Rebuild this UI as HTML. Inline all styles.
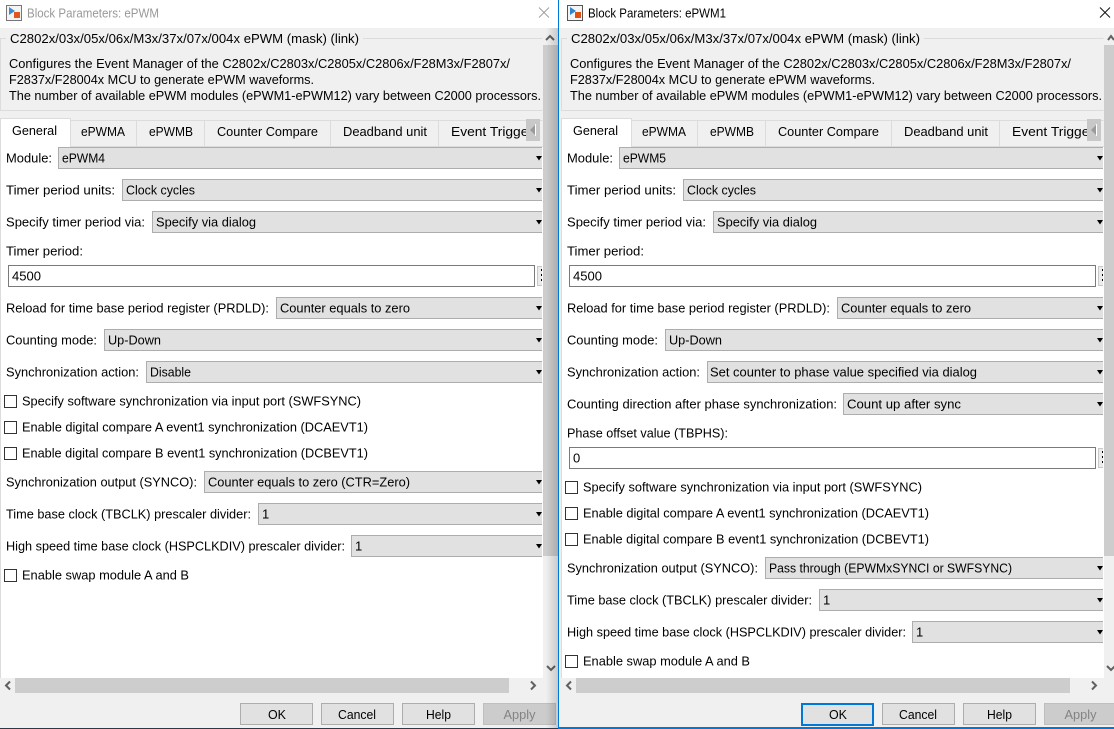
<!DOCTYPE html>
<html><head><meta charset="utf-8"><title>Block Parameters</title>
<style>
html,body{margin:0;padding:0;background:#fff;width:1114px;height:729px;overflow:hidden}
svg{display:block;position:absolute;left:0;top:0}
text{font-family:"Liberation Sans",sans-serif;font-size:13px;fill:#000}
.r{shape-rendering:crispEdges}
.dd{fill:#e1e1e1;stroke:#adadad;stroke-width:1;shape-rendering:crispEdges}
.ed{fill:#fff;stroke:#7a7a7a;stroke-width:1;shape-rendering:crispEdges}
.cb{fill:#fff;stroke:#333;stroke-width:1;shape-rendering:crispEdges}
.btn{fill:#e1e1e1;stroke:#adadad;stroke-width:1;shape-rendering:crispEdges}
.ap{fill:#cccccc;stroke:#bfbfbf;stroke-width:1;shape-rendering:crispEdges}
.ln{fill:none;stroke:#dcdcdc;stroke-width:1;shape-rendering:crispEdges}
.ar{fill:none;stroke:#606060;stroke-width:2}
.eb{fill:#ececec;stroke:#c8c8c8;stroke-width:1;shape-rendering:crispEdges}
</style></head><body>
<svg width="1114" height="729" viewBox="0 0 1114 729" xmlns="http://www.w3.org/2000/svg">
<defs>
<clipPath id="c"><rect x="0" y="146" width="542" height="532"/></clipPath>
<clipPath id="tabs"><rect x="0" y="118" width="526" height="29"/></clipPath>
<linearGradient id="sh" x1="0" x2="1" y1="0" y2="0"><stop offset="0" stop-color="#000" stop-opacity="0"/><stop offset="1" stop-color="#000" stop-opacity=".16"/></linearGradient>
</defs>
<rect class="r" width="1114" height="729" fill="#f0f0f0"/>

<!-- LEFT WINDOW -->
<g>
<rect class="r" x="0" y="0" width="558" height="28" fill="#fff"/>
<rect class="r" x="6.5" y="5.500" width="15" height="15" fill="#f4f4f4" stroke="#777"/>
<path d="M9 7l6 4-6 4z" fill="#3a8fd0"/><rect class="r" x="14" y="12" width="6" height="6" fill="#e0581c"/>
<text x="27" y="17.500" style="fill:#999" textLength="132" lengthAdjust="spacingAndGlyphs">Block Parameters: ePWM</text>
<path d="M539 7.500l10 10M549 7.500l-10 10" stroke="#a0a0a0" stroke-width="1" fill="none"/>

<path class="ln" d="M6 38.500H0.500V110.500H542.500M363 38.500H542.500"/>
<text x="10" y="43" textLength="349" lengthAdjust="spacingAndGlyphs">C2802x/03x/05x/06x/M3x/37x/07x/004x ePWM (mask) (link)</text>
<text x="9" y="68" textLength="501" lengthAdjust="spacingAndGlyphs">Configures the Event Manager of the C2802x/C2803x/C2805x/C2806x/F28M3x/F2807x/</text>
<text x="9" y="84" textLength="305" lengthAdjust="spacingAndGlyphs">F2837x/F28004x MCU to generate ePWM waveforms.</text>
<text x="9" y="100" textLength="532" lengthAdjust="spacingAndGlyphs">The number of available ePWM modules (ePWM1-ePWM12) vary between C2000 processors.</text>

<path class="ln" d="M70 120.500H542.500M136.500 120V146M204.500 120V146M330.500 120V146M438.500 120V146"/>
<rect class="r" x="0" y="146" width="543" height="1" fill="#dcdcdc"/>
<rect class="r" x="0" y="118" width="71" height="30" fill="#dcdcdc"/>
<rect class="r" x="1" y="119" width="69" height="29" fill="#fff"/>
<text x="12" y="135" textLength="45" lengthAdjust="spacingAndGlyphs">General</text>
<text x="81" y="136" textLength="44" lengthAdjust="spacingAndGlyphs">ePWMA</text>
<text x="149" y="136" textLength="44" lengthAdjust="spacingAndGlyphs">ePWMB</text>
<text x="217" y="136" textLength="101" lengthAdjust="spacingAndGlyphs">Counter Compare</text>
<text x="343" y="136" textLength="84" lengthAdjust="spacingAndGlyphs">Deadband unit</text>
<g clip-path="url(#tabs)"><text x="451" y="136" textLength="82" lengthAdjust="spacingAndGlyphs">Event Trigger</text></g>
<rect class="r" x="526" y="119" width="14" height="22" fill="#c8c8c8"/>
<path d="M536 124v12l-6-6z" fill="#9a9a9a"/><rect class="r" x="535" y="124" width="1" height="12" fill="#fff"/>

<rect class="r" x="0" y="147" width="543" height="531" fill="#fff"/>
<rect class="r" x="0" y="147" width="1" height="531" fill="#dcdcdc"/>
<g clip-path="url(#c)">
<text x="6" y="162.500" textLength="46" lengthAdjust="spacingAndGlyphs">Module:</text>
<rect class="dd" x="58.500" y="147.500" width="600" height="21"/><text x="62" y="162.500" textLength="43" lengthAdjust="spacingAndGlyphs">ePWM4</text>
<path d="M536 156h6l-3 4.500z"/>
<text x="6" y="194.500" textLength="109" lengthAdjust="spacingAndGlyphs">Timer period units:</text>
<rect class="dd" x="122.500" y="179.500" width="600" height="21"/><text x="126" y="194.500" textLength="69" lengthAdjust="spacingAndGlyphs">Clock cycles</text>
<path d="M536 188h6l-3 4.500z"/>
<text x="6" y="226.500" textLength="139" lengthAdjust="spacingAndGlyphs">Specify timer period via:</text>
<rect class="dd" x="152.500" y="211.500" width="600" height="21"/><text x="156" y="226.500" textLength="100" lengthAdjust="spacingAndGlyphs">Specify via dialog</text>
<path d="M536 220h6l-3 4.500z"/>
<text x="6" y="255.500" textLength="77" lengthAdjust="spacingAndGlyphs">Timer period:</text>
<rect class="ed" x="8.500" y="265.500" width="526" height="21"/><text x="12" y="280.500" textLength="29" lengthAdjust="spacingAndGlyphs">4500</text>
<rect class="eb" x="537.500" y="266.500" width="8" height="19"/><path class="r" d="M541 269h1v2h-1zM541 274h1v2h-1zM541 279h1v2h-1z" fill="#000"/>
<text x="6" y="312.500" textLength="263" lengthAdjust="spacingAndGlyphs">Reload for time base period register (PRDLD):</text>
<rect class="dd" x="276.500" y="297.500" width="600" height="21"/><text x="280" y="312.500" textLength="130" lengthAdjust="spacingAndGlyphs">Counter equals to zero</text>
<path d="M536 306h6l-3 4.500z"/>
<text x="6" y="344.500" textLength="91" lengthAdjust="spacingAndGlyphs">Counting mode:</text>
<rect class="dd" x="104.500" y="329.500" width="600" height="21"/><text x="108" y="344.500" textLength="53" lengthAdjust="spacingAndGlyphs">Up-Down</text>
<path d="M536 338h6l-3 4.500z"/>
<text x="6" y="376.500" textLength="133" lengthAdjust="spacingAndGlyphs">Synchronization action:</text>
<rect class="dd" x="146.500" y="361.500" width="600" height="21"/><text x="150" y="376.500" textLength="41" lengthAdjust="spacingAndGlyphs">Disable</text>
<path d="M536 370h6l-3 4.500z"/>
<rect class="cb" x="4.500" y="395.500" width="12" height="12"/><text x="22" y="405.500" textLength="339" lengthAdjust="spacingAndGlyphs">Specify software synchronization via input port (SWFSYNC)</text>
<rect class="cb" x="4.500" y="421.500" width="12" height="12"/><text x="22" y="431.500" textLength="346" lengthAdjust="spacingAndGlyphs">Enable digital compare A event1 synchronization (DCAEVT1)</text>
<rect class="cb" x="4.500" y="447.500" width="12" height="12"/><text x="22" y="457.500" textLength="346" lengthAdjust="spacingAndGlyphs">Enable digital compare B event1 synchronization (DCBEVT1)</text>
<text x="6" y="486.500" textLength="191" lengthAdjust="spacingAndGlyphs">Synchronization output (SYNCO):</text>
<rect class="dd" x="204.500" y="471.500" width="600" height="21"/><text x="208" y="486.500" textLength="202" lengthAdjust="spacingAndGlyphs">Counter equals to zero (CTR=Zero)</text>
<path d="M536 480h6l-3 4.500z"/>
<text x="6" y="518.500" textLength="245" lengthAdjust="spacingAndGlyphs">Time base clock (TBCLK) prescaler divider:</text>
<rect class="dd" x="258.500" y="503.500" width="600" height="21"/><text x="262" y="518.500">1</text>
<path d="M536 512h6l-3 4.500z"/>
<text x="6" y="550.500" textLength="339" lengthAdjust="spacingAndGlyphs">High speed time base clock (HSPCLKDIV) prescaler divider:</text>
<rect class="dd" x="351.500" y="535.500" width="600" height="21"/><text x="355" y="550.500">1</text>
<path d="M536 544h6l-3 4.500z"/>
<rect class="cb" x="4.500" y="569.500" width="12" height="12"/><text x="22" y="579.500" textLength="167" lengthAdjust="spacingAndGlyphs">Enable swap module A and B</text>
</g>

<!-- scrollbars -->
<rect class="r" x="543" y="28" width="15" height="650" fill="#f0f0f0"/>
<rect class="r" x="543" y="45" width="15" height="511" fill="#cdcdcd"/>
<path class="ar" d="M546 40l4-4 4 4"/><path class="ar" d="M547 666l4 4 4-4"/>
<rect class="r" x="15" y="678" width="494" height="15" fill="#cdcdcd"/>
<path class="ar" d="M10 681.500l-4 4 4 4"/><path class="ar" d="M531 681.500l4 4-4 4"/>

<rect class="btn" x="240.500" y="703.500" width="72" height="21"/><text x="268" y="719" textLength="18" lengthAdjust="spacingAndGlyphs">OK</text>
<rect class="btn" x="321.500" y="703.500" width="72" height="21"/><text x="338" y="719" textLength="38" lengthAdjust="spacingAndGlyphs">Cancel</text>
<rect class="btn" x="402.500" y="703.500" width="72" height="21"/><text x="426" y="719" textLength="25" lengthAdjust="spacingAndGlyphs">Help</text>
<rect class="ap" x="483.500" y="703.500" width="72" height="21"/><text x="503.500" y="719" style="fill:#838383" textLength="32" lengthAdjust="spacingAndGlyphs">Apply</text>
<rect class="r" x="0" y="728" width="558" height="1" fill="#2b3a4a"/>
<rect class="r" x="546" y="28" width="12" height="700" fill="url(#sh)"/>
</g>

<!-- RIGHT WINDOW -->
<rect class="r" x="558" y="0" width="556" height="28" fill="#fff"/>
<rect class="r" x="559" y="28" width="555" height="701" fill="#f0f0f0"/>
<rect class="r" x="567.500" y="5.500" width="15" height="15" fill="#f4f4f4" stroke="#555"/>
<path d="M570 7l6 4-6 4z" fill="#2f86cc"/><rect class="r" x="575" y="12" width="6" height="6" fill="#e0500f"/>
<text x="588" y="17.500" textLength="138" lengthAdjust="spacingAndGlyphs">Block Parameters: ePWM1</text>
<path d="M1100 7.500l10 10M1110 7.500l-10 10" stroke="#111" stroke-width="1" fill="none"/>

<g transform="translate(561,0)">
<path class="ln" d="M6 38.500H0.500V110.500H542.500M363 38.500H542.500"/>
<text x="10" y="43" textLength="349" lengthAdjust="spacingAndGlyphs">C2802x/03x/05x/06x/M3x/37x/07x/004x ePWM (mask) (link)</text>
<text x="9" y="68" textLength="501" lengthAdjust="spacingAndGlyphs">Configures the Event Manager of the C2802x/C2803x/C2805x/C2806x/F28M3x/F2807x/</text>
<text x="9" y="84" textLength="305" lengthAdjust="spacingAndGlyphs">F2837x/F28004x MCU to generate ePWM waveforms.</text>
<text x="9" y="100" textLength="532" lengthAdjust="spacingAndGlyphs">The number of available ePWM modules (ePWM1-ePWM12) vary between C2000 processors.</text>

<path class="ln" d="M70 120.500H542.500M136.500 120V146M204.500 120V146M330.500 120V146M438.500 120V146"/>
<rect class="r" x="0" y="146" width="543" height="1" fill="#dcdcdc"/>
<rect class="r" x="0" y="118" width="71" height="30" fill="#dcdcdc"/>
<rect class="r" x="1" y="119" width="69" height="29" fill="#fff"/>
<text x="12" y="135" textLength="45" lengthAdjust="spacingAndGlyphs">General</text>
<text x="81" y="136" textLength="44" lengthAdjust="spacingAndGlyphs">ePWMA</text>
<text x="149" y="136" textLength="44" lengthAdjust="spacingAndGlyphs">ePWMB</text>
<text x="217" y="136" textLength="101" lengthAdjust="spacingAndGlyphs">Counter Compare</text>
<text x="343" y="136" textLength="84" lengthAdjust="spacingAndGlyphs">Deadband unit</text>
<g clip-path="url(#tabs)"><text x="451" y="136" textLength="82" lengthAdjust="spacingAndGlyphs">Event Trigger</text></g>
<rect class="r" x="526" y="119" width="14" height="22" fill="#c8c8c8"/>
<path d="M536 124v12l-6-6z" fill="#9a9a9a"/><rect class="r" x="535" y="124" width="1" height="12" fill="#fff"/>

<rect class="r" x="0" y="147" width="543" height="531" fill="#fff"/>
<rect class="r" x="0" y="147" width="1" height="531" fill="#dcdcdc"/>
<g clip-path="url(#c)">
<text x="6" y="162.500" textLength="46" lengthAdjust="spacingAndGlyphs">Module:</text>
<rect class="dd" x="58.500" y="147.500" width="600" height="21"/><text x="62" y="162.500" textLength="43" lengthAdjust="spacingAndGlyphs">ePWM5</text>
<path d="M536 156h6l-3 4.500z"/>
<text x="6" y="194.500" textLength="109" lengthAdjust="spacingAndGlyphs">Timer period units:</text>
<rect class="dd" x="122.500" y="179.500" width="600" height="21"/><text x="126" y="194.500" textLength="69" lengthAdjust="spacingAndGlyphs">Clock cycles</text>
<path d="M536 188h6l-3 4.500z"/>
<text x="6" y="226.500" textLength="139" lengthAdjust="spacingAndGlyphs">Specify timer period via:</text>
<rect class="dd" x="152.500" y="211.500" width="600" height="21"/><text x="156" y="226.500" textLength="100" lengthAdjust="spacingAndGlyphs">Specify via dialog</text>
<path d="M536 220h6l-3 4.500z"/>
<text x="6" y="255.500" textLength="77" lengthAdjust="spacingAndGlyphs">Timer period:</text>
<rect class="ed" x="8.500" y="265.500" width="526" height="21"/><text x="12" y="280.500" textLength="29" lengthAdjust="spacingAndGlyphs">4500</text>
<rect class="eb" x="537.500" y="266.500" width="8" height="19"/><path class="r" d="M541 269h1v2h-1zM541 274h1v2h-1zM541 279h1v2h-1z" fill="#000"/>
<text x="6" y="312.500" textLength="263" lengthAdjust="spacingAndGlyphs">Reload for time base period register (PRDLD):</text>
<rect class="dd" x="276.500" y="297.500" width="600" height="21"/><text x="280" y="312.500" textLength="130" lengthAdjust="spacingAndGlyphs">Counter equals to zero</text>
<path d="M536 306h6l-3 4.500z"/>
<text x="6" y="344.500" textLength="91" lengthAdjust="spacingAndGlyphs">Counting mode:</text>
<rect class="dd" x="104.500" y="329.500" width="600" height="21"/><text x="108" y="344.500" textLength="53" lengthAdjust="spacingAndGlyphs">Up-Down</text>
<path d="M536 338h6l-3 4.500z"/>
<text x="6" y="376.500" textLength="133" lengthAdjust="spacingAndGlyphs">Synchronization action:</text>
<rect class="dd" x="146.500" y="361.500" width="600" height="21"/><text x="149" y="376.500" textLength="267" lengthAdjust="spacingAndGlyphs">Set counter to phase value specified via dialog</text>
<path d="M536 370h6l-3 4.500z"/>
<text x="6" y="408.500" textLength="270" lengthAdjust="spacingAndGlyphs">Counting direction after phase synchronization:</text>
<rect class="dd" x="282.500" y="393.500" width="600" height="21"/><text x="286" y="408.500" textLength="114" lengthAdjust="spacingAndGlyphs">Count up after sync</text>
<path d="M536 402h6l-3 4.500z"/>
<text x="6" y="437.500" textLength="161" lengthAdjust="spacingAndGlyphs">Phase offset value (TBPHS):</text>
<rect class="ed" x="8.500" y="447.500" width="526" height="21"/><text x="12" y="462.500">0</text>
<rect class="eb" x="537.500" y="448.500" width="8" height="19"/><path class="r" d="M541 451h1v2h-1zM541 456h1v2h-1zM541 461h1v2h-1z" fill="#000"/>
<rect class="cb" x="4.500" y="481.500" width="12" height="12"/><text x="22" y="491.500" textLength="339" lengthAdjust="spacingAndGlyphs">Specify software synchronization via input port (SWFSYNC)</text>
<rect class="cb" x="4.500" y="507.500" width="12" height="12"/><text x="22" y="517.500" textLength="346" lengthAdjust="spacingAndGlyphs">Enable digital compare A event1 synchronization (DCAEVT1)</text>
<rect class="cb" x="4.500" y="533.500" width="12" height="12"/><text x="22" y="543.500" textLength="346" lengthAdjust="spacingAndGlyphs">Enable digital compare B event1 synchronization (DCBEVT1)</text>
<text x="6" y="572.500" textLength="191" lengthAdjust="spacingAndGlyphs">Synchronization output (SYNCO):</text>
<rect class="dd" x="204.500" y="557.500" width="600" height="21"/><text x="208" y="572.500" textLength="243" lengthAdjust="spacingAndGlyphs">Pass through (EPWMxSYNCI or SWFSYNC)</text>
<path d="M536 566h6l-3 4.500z"/>
<text x="6" y="604.500" textLength="245" lengthAdjust="spacingAndGlyphs">Time base clock (TBCLK) prescaler divider:</text>
<rect class="dd" x="258.500" y="589.500" width="600" height="21"/><text x="262" y="604.500">1</text>
<path d="M536 598h6l-3 4.500z"/>
<text x="6" y="636.500" textLength="339" lengthAdjust="spacingAndGlyphs">High speed time base clock (HSPCLKDIV) prescaler divider:</text>
<rect class="dd" x="351.500" y="621.500" width="600" height="21"/><text x="355" y="636.500">1</text>
<path d="M536 630h6l-3 4.500z"/>
<rect class="cb" x="4.500" y="655.500" width="12" height="12"/><text x="22" y="665.500" textLength="167" lengthAdjust="spacingAndGlyphs">Enable swap module A and B</text>
</g>

<rect class="r" x="543" y="28" width="10" height="650" fill="#f0f0f0"/>
<rect class="r" x="543" y="45" width="10" height="511" fill="#cdcdcd"/>
<path class="ar" d="M548 40l3-4 3 4" transform="translate(-1,0)"/><path class="ar" d="M547 666l4 4 4-4" transform="translate(-1,0)"/>
<rect class="r" x="15" y="678" width="494" height="15" fill="#cdcdcd"/>
<path class="ar" d="M10 681.500l-4 4 4 4"/><path class="ar" d="M531 681.500l4 4-4 4"/>

<rect x="241" y="704" width="71" height="21" fill="#e1e1e1" stroke="#0078d7" stroke-width="2" class="r"/><text x="268" y="719" textLength="18" lengthAdjust="spacingAndGlyphs">OK</text>
<rect class="btn" x="321.500" y="703.500" width="72" height="21"/><text x="338" y="719" textLength="38" lengthAdjust="spacingAndGlyphs">Cancel</text>
<rect class="btn" x="402.500" y="703.500" width="72" height="21"/><text x="426" y="719" textLength="25" lengthAdjust="spacingAndGlyphs">Help</text>
<rect class="ap" x="483.500" y="703.500" width="72" height="21"/><text x="503.500" y="719" style="fill:#838383" textLength="32" lengthAdjust="spacingAndGlyphs">Apply</text>
</g>
<rect class="r" x="558" y="0" width="1" height="729" fill="#0078d7"/>
<rect class="r" x="558" y="727" width="556" height="2" fill="#0078d7"/>
</svg>
</body></html>
